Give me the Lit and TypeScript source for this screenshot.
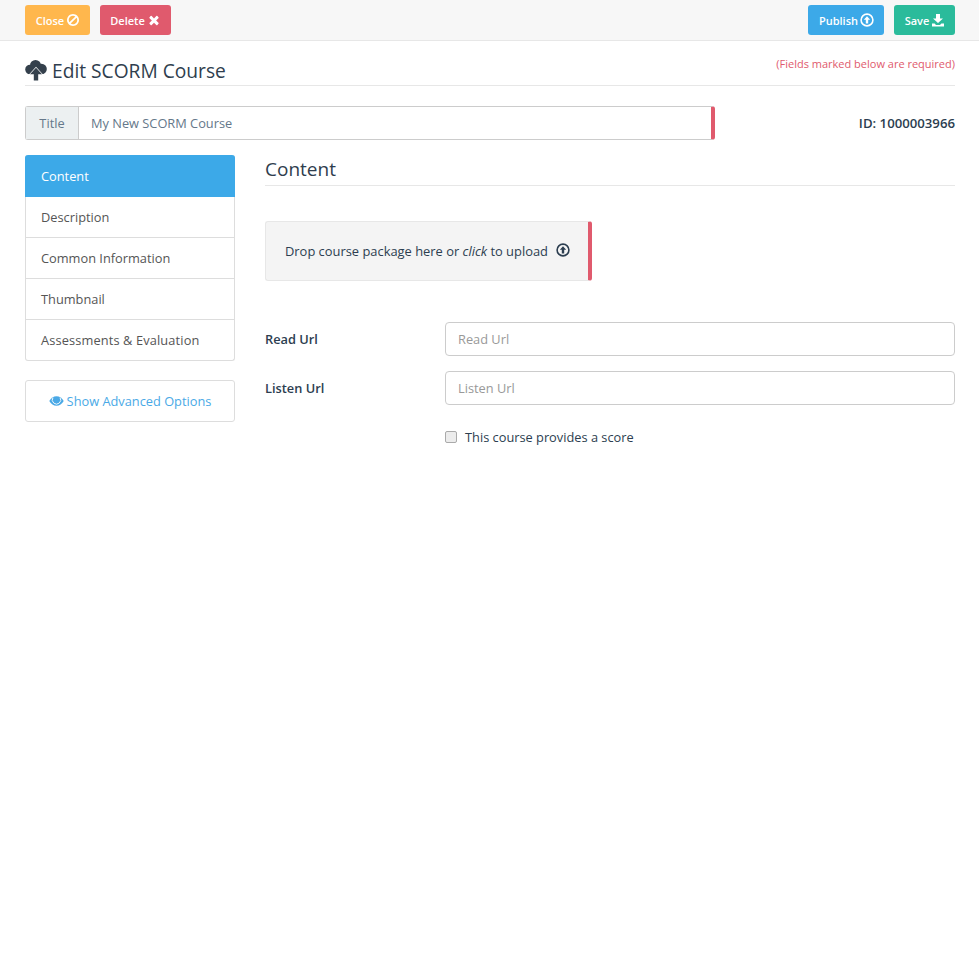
import { LitElement, html, css } from "lit";
import { customElement } from "lit/decorators.js";

const times = "M1490 1322q0 40-28 68l-136 136q-28 28-68 28t-68-28l-294-294-294 294q-28 28-68 28t-68-28l-136-136q-28-28-28-68t28-68l294-294-294-294q-28-28-28-68t28-68l136-136q28-28 68-28t68 28l294 294 294-294q28-28 68-28t68 28l136 136q28 28 28 68t-28 68l-294 294 294 294q28 28 28 68z";
const ban = "M1440 893q0-161-87-295l-754 753q137 89 297 89 111 0 211.5-43.5t173.5-116.5 116-174.5 43-212.5zm-999 299l755-754q-135-91-300-91-148 0-273 73t-198 199-73 274q0 162 89 299zm1223-299q0 157-61 300t-163.5 246-245 164-298.5 61-298.5-61-245-164-163.5-246-61-300 61-299.5 163.5-245.5 245-164 298.5-61 298.5 61 245 164 163.5 245.5 61 299.5z";

const fa = (d: string, size: number) =>
  html`<svg class="ic" width=${size} height=${size} viewBox="0 0 1792 1792" fill="currentColor"><path d=${d}></path></svg>`;

const circleUp = (size: number) =>
  html`<svg class="ic" width=${size} height=${size} viewBox="0 0 14 14"><circle cx="7" cy="7" r="5.9" fill="none" stroke="currentColor" stroke-width="1.6"></circle><path d="M7 3.2 10.2 6.8H8.2V10.4H5.8V6.8H3.8Z" fill="currentColor"></path></svg>`;

const save = html`<svg class="ic" width="14" height="14" viewBox="0 0 14 14" fill="currentColor"><path d="M5 1H9V5.5H12L7 10 2 5.5H5Z"></path><path d="M1 10.500H3.600L5 12H9L10.400 10.500H13V13.500H1Z"></path></svg>`;

const eye = html`<svg class="ic" width="15" height="12" viewBox="0 0 15 12"><path d="M.3 6C2 3 4.500 1.200 7.500 1.200S13 3 14.700 6C13 9 10.500 10.800 7.500 10.800S2 9 .3 6Z" fill="currentColor"></path><path d="M3.900 2.700a4.200 4.200 0 1 0 7.200 0" fill="none" stroke="#fff" stroke-width=".9"></path><circle cx="7.500" cy="5.400" r="2.700" fill="currentColor"></circle></svg>`;

const cloud = html`<svg class="cloud" width="22" height="22" viewBox="0 0 22 22" fill="currentColor"><circle cx="5" cy="10.500" r="4.800"></circle><circle cx="10.500" cy="6.500" r="5.500"></circle><circle cx="16.500" cy="10" r="5.300"></circle><rect x="5" y="10" width="12" height="5.300"></rect><path d="M11 8.800 17 15.300H13.200V21.500H8.800V15.300H5Z" stroke="#fff" stroke-width="1.300" paint-order="stroke"></path></svg>`;

@customElement("app-root")
export class AppRoot extends LitElement {
  static styles = css`
    :host {
      display: block;
      min-height: 979px;
      background: #fff;
      font-family: "Open Sans", "Noto Sans", sans-serif;
      font-size: 12.8px;
      color: #34495e;
      box-sizing: border-box;
    }
    * { box-sizing: border-box; }
    .ic { vertical-align: -2px; flex: none; }
    .topbar {
      height: 41px;
      padding: 5px 24px 0 25px;
      display: flex;
      justify-content: space-between;
      background: #f7f7f7;
      border-bottom: 1px solid #e7e7e7;
    }
    .group { display: flex; gap: 10px; }
    .btn {
      height: 30px;
      display: flex;
      align-items: center;
      justify-content: center;
      gap: 2px;
      color: #fff;
      font-size: 11px;
      font-weight: 600;
      border-radius: 3px;
    }
    .close { width: 65px; background: #ffb74d; padding-left: 1px; }
    .delete { width: 71px; background: #e05a6d; }
    .publish { width: 76px; background: #3ca9e8; padding-left: 1px; }
    .saveb { width: 61px; background: #2abb9b; padding-left: 1px; }
    .main { padding: 0 24px 0 25px; }
    .head {
      height: 45px;
      display: flex;
      justify-content: space-between;
      border-bottom: 1px solid #e7e7e7;
    }
    h1 {
      margin: 0;
      padding-top: 16px;
      font-size: 19.2px;
      font-weight: 400;
      line-height: 27px;
      display: flex;
      gap: 5px;
      color: #2f3e4e;
    }
    .cloud { color: #34404c; margin-top: 2px; flex: none; }
    .req { font-size: 11px; color: #e05a6d; padding-top: 15px; line-height: 15px; }
    .title-row {
      margin-top: 20px;
      display: flex;
      justify-content: space-between;
      align-items: center;
    }
    .title-group {
      width: 690px;
      height: 34px;
      display: flex;
      border: 1px solid #ccc;
      border-right: 4px solid #e05a6d;
      border-radius: 3px;
      color: #65788a;
    }
    .addon {
      width: 53px;
      background: #ecf0f1;
      border-right: 1px solid #ccc;
      display: flex;
      align-items: center;
      justify-content: center;
    }
    .val { padding-left: 12px; display: flex; align-items: center; }
    .id { font-weight: 600; font-size: 13.2px; color: #2c3e50; }
    .cols { margin-top: 15px; display: flex; gap: 30px; align-items: flex-start; }
    .side { width: 210px; flex: none; }
    .nav { border: 1px solid #ddd; border-top: 0; border-radius: 3px; }
    .item {
      height: 41px;
      padding-left: 15px;
      display: flex;
      align-items: center;
      color: #555;
      border-bottom: 1px solid #ddd;
    }
    .item:last-child { border-bottom: 0; height: 40px; letter-spacing: 0.13px; }
    .item.on {
      margin: 0 -1px;
      padding-left: 16px;
      height: 42px;
      background: #3ca9e8;
      color: #fff;
      border: 0;
      border-radius: 3px 3px 0 0;
    }
    .adv {
      margin-top: 19px;
      height: 42px;
      border: 1px solid #ddd;
      border-radius: 3px;
      display: flex;
      align-items: center;
      justify-content: center;
      gap: 3px;
      color: #4aa9e6;
    }
    .content { flex: 1; }
    h2 {
      margin: 0;
      height: 31px;
      font-size: 19px;
      font-weight: 400;
      line-height: 29px;
      border-bottom: 1px solid #e7e7e7;
      color: #2f3e4e;
    }
    .drop {
      margin-top: 35px;
      width: 327px;
      height: 60px;
      display: flex;
      align-items: center;
      gap: 8px;
      padding-left: 19px;
      font-size: 12.9px;
      background: #f4f4f4;
      border: 1px solid #e7e7e7;
      border-right: 4px solid #e05a6d;
      border-radius: 3px;
      color: #2c3e50;
    }
    .drop svg { margin-top: -3px; }
    .form { margin-top: 41px; display: flex; flex-direction: column; gap: 15px; }
    .row { display: flex; align-items: center; }
    .row label { width: 180px; font-weight: 600; color: #2c3e50; }
    .field {
      flex: 1;
      height: 34px;
      padding-left: 12px;
      display: flex;
      align-items: center;
      border: 1px solid #ccc;
      border-radius: 4px;
      color: #999;
    }
    .check {
      margin: 22px 0 0 180px;
      display: flex;
      align-items: center;
      gap: 8px;
      color: #2c3e50;
      line-height: 20px;
    }
    .box {
      width: 12px;
      height: 12px;
      border: 1px solid #aaa;
      border-radius: 2px;
      background: #ececec;
    }
  `;

  render() {
    const items = ["Description", "Common Information", "Thumbnail", "Assessments & Evaluation"];
    return html`
      <div class="topbar">
        <div class="group">
          <div class="btn close">Close ${fa(ban, 14)}</div>
          <div class="btn delete">Delete ${fa(times, 14)}</div>
        </div>
        <div class="group">
          <div class="btn publish">Publish ${circleUp(14)}</div>
          <div class="btn saveb">Save ${save}</div>
        </div>
      </div>
      <div class="main">
        <div class="head">
          <h1>${cloud}<span>Edit SCORM Course</span></h1>
          <div class="req">(Fields marked below are required)</div>
        </div>
        <div class="title-row">
          <div class="title-group">
            <div class="addon">Title</div>
            <div class="val">My New SCORM Course</div>
          </div>
          <div class="id">ID: 1000003966</div>
        </div>
        <div class="cols">
          <div class="side">
            <div class="nav">
              <div class="item on">Content</div>
              ${items.map((i) => html`<div class="item">${i}</div>`)}
            </div>
            <div class="adv">${eye}<span>Show Advanced Options</span></div>
          </div>
          <div class="content">
            <h2>Content</h2>
            <div class="drop">
              <span>Drop course package here or <em>click</em> to upload</span>${circleUp(14)}
            </div>
            <div class="form">
              <div class="row"><label>Read Url</label><div class="field">Read Url</div></div>
              <div class="row"><label>Listen Url</label><div class="field">Listen Url</div></div>
            </div>
            <div class="check"><span class="box"></span><span>This course provides a score</span></div>
          </div>
        </div>
      </div>
    `;
  }
}
